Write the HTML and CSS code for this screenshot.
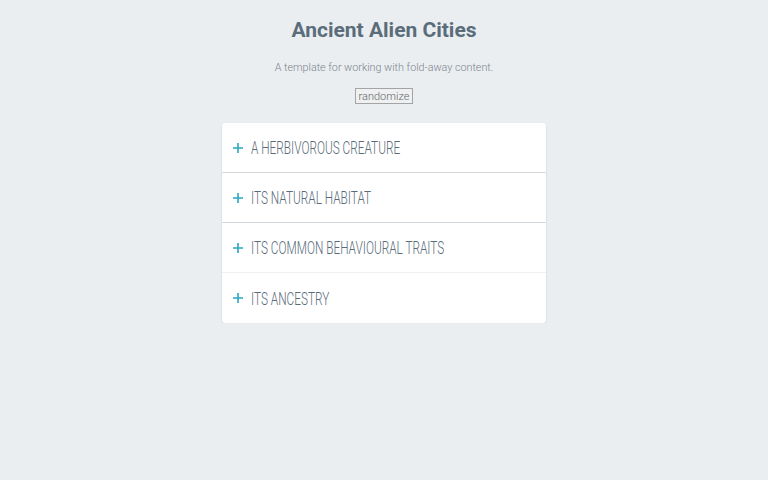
FILE: index.html
```html
<!DOCTYPE html>
<html lang="en">
<head>
    <meta charset="UTF-8">
    <meta name="viewport" content="width=device-width, initial-scale=1.0">
    <title>Ancient Alien Cities</title>
    <link rel="stylesheet" href="styles.css">
</head>
<body>
    <div class="page">
        <h1>Ancient Alien Cities</h1>
        <p class="lead">A template for working with fold-away content.</p>
        <button class="randomize">randomize</button>

        <ul class="accordion">
            <li class="fold">
                <svg class="plus" viewBox="0 0 10 10"><path d="M5 0v10M0 5h10"/></svg>
                <span class="label">A Herbivorous Creature</span>
            </li>
            <li class="fold">
                <svg class="plus" viewBox="0 0 10 10"><path d="M5 0v10M0 5h10"/></svg>
                <span class="label">Its Natural Habitat</span>
            </li>
            <li class="fold">
                <svg class="plus" viewBox="0 0 10 10"><path d="M5 0v10M0 5h10"/></svg>
                <span class="label">Its Common Behavioural Traits</span>
            </li>
            <li class="fold last">
                <svg class="plus" viewBox="0 0 10 10"><path d="M5 0v10M0 5h10"/></svg>
                <span class="label">Its Ancestry</span>
            </li>
        </ul>
    </div>
</body>
</html>
```

FILE: styles.css
```css
body {
    margin: 0;
    background: #eaeef1;
    font-family: Roboto, "Liberation Sans", sans-serif;
    color: #5b6d7b;
}
.page {
    display: flex;
    flex-direction: column;
    align-items: center;
    padding-top: 17px;
}
h1 {
    margin: 0;
    font-size: 21px;
    font-weight: 700;
    line-height: 26px;
    color: #5b6d7b;
}
.lead {
    margin: 18px 0 0;
    font-size: 10.75px;
    font-weight: 300;
    line-height: 14px;
    color: #7d858c;
}
.randomize {
    margin-top: 13px;
    padding: 0 3px;
    height: 16px;
    font-family: Roboto, sans-serif;
    font-size: 11px;
    font-weight: 300;
    color: #666;
    background: #eef0f2;
    border: 1px solid #a4a4a4;
    border-radius: 0;
}
.accordion {
    list-style: none;
    margin: 19px 0 0;
    padding: 0;
    width: 324px;
    background: #fff;
    border-radius: 3px;
    box-shadow: 0 1px 2px rgba(0,0,0,0.15);
}
.fold {
    display: flex;
    align-items: center;
    height: 49px;
    padding-left: 11px;
    border-bottom: 1px solid #d3d8dc;
}
.fold:nth-child(3) {
    border-bottom-color: #eef0f2;
}
.fold.last {
    border-bottom: none;
    height: 50px;
}
.plus {
    width: 10px;
    height: 10px;
    margin-right: 8px;
    fill: none;
    stroke: #29a7c0;
    stroke-width: 1.6;
}
.label {
    font-family: Roboto, sans-serif;
    font-size: 18px;
    font-weight: 300;
    text-transform: uppercase;
    color: #596b79;
    transform: scaleX(0.656);
    transform-origin: left center;
}
```
